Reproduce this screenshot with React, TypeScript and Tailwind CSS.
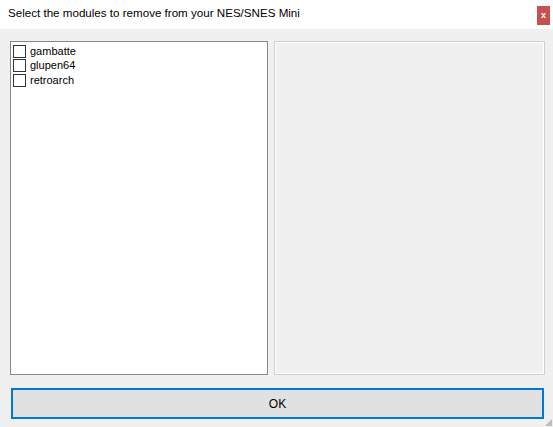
import React from "react";

const modules = ["gambatte", "glupen64", "retroarch"];

function ModuleRow({ name }: { name: string }) {
  return (
    <label className="flex items-center h-[14.5px] gap-[4px] pl-[2px]">
      <span className="w-[13px] h-[13px] border border-[#333] bg-white shrink-0" />
      <span className="text-[11px] leading-none text-black">{name}</span>
    </label>
  );
}

export default function App() {
  return (
    <div
      className="w-[553px] h-[427px] bg-[#f0f0f0] flex flex-col relative overflow-hidden"
      style={{ fontFamily: "'Liberation Sans', Arial, sans-serif" }}
    >
      {/* Title bar */}
      <div className="h-[29px] bg-white flex items-start justify-between pl-[8px] pr-[3px] shrink-0">
        <span className="text-[11.6px] leading-none text-black mt-[7px]">
          Select the modules to remove from your NES/SNES Mini
        </span>
        <button className="w-[13px] h-[19px] bg-[#c75050] text-white text-[9px] font-bold flex items-center justify-center mt-[6px]">
          x
        </button>
      </div>

      {/* Body */}
      <div className="flex gap-[6px] pl-[10px] pr-[8px] pt-[12px] h-[346px] shrink-0">
        <div className="w-[258px] h-full bg-white border border-[#828790] pt-[2px] flex flex-col">
          {modules.map((m) => (
            <ModuleRow key={m} name={m} />
          ))}
        </div>
        <div className="flex-1 h-full border border-[#cfcfcf]">
          <div className="w-full h-full border border-white" />
        </div>
      </div>

      {/* OK */}
      <div className="pl-[11px] pr-[9px] pt-[13px]">
        <button className="w-[533px] h-[31px] bg-[#e1e1e1] border-2 border-[#0078d7] text-[12px] text-black flex items-center justify-center">
          OK
        </button>
      </div>

      {/* resize grip */}
      <svg className="absolute right-[1px] bottom-[1px]" width="6" height="6" viewBox="0 0 6 6">
        <rect x="4" y="0" width="2" height="2" fill="#bdbdbd" />
        <rect x="2" y="2" width="2" height="2" fill="#bdbdbd" />
        <rect x="4" y="2" width="2" height="2" fill="#bdbdbd" />
        <rect x="0" y="4" width="2" height="2" fill="#bdbdbd" />
        <rect x="2" y="4" width="2" height="2" fill="#bdbdbd" />
        <rect x="4" y="4" width="2" height="2" fill="#bdbdbd" />
      </svg>
    </div>
  );
}
